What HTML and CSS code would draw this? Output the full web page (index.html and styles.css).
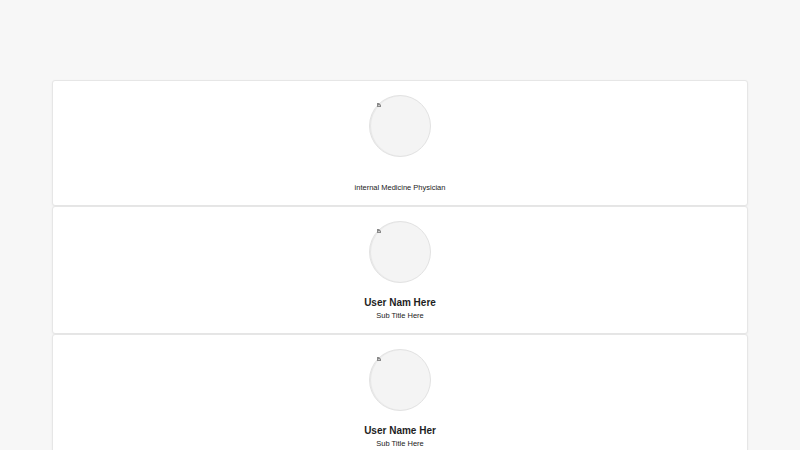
FILE: index.html
```html
<!DOCTYPE html>
<html lang="en">
<head>
<meta charset="utf-8">
<title>Users</title>
<link rel="stylesheet" href="styles.css">
</head>
<body>
<div class="list">
  <div class="card">
    <div class="avatar"><svg class="broken" width="4" height="4" viewBox="0 0 4 4"><path d="M0 0h2l2 2v2H0z" fill="#8a8a8a"/><path d="M1 2h2v1H1z" fill="#c8c8c8"/></svg></div>
    <div class="name empty"></div>
    <div class="sub">internal Medicine Physician</div>
  </div>
  <div class="card">
    <div class="avatar"><svg class="broken" width="4" height="4" viewBox="0 0 4 4"><path d="M0 0h2l2 2v2H0z" fill="#8a8a8a"/><path d="M1 2h2v1H1z" fill="#c8c8c8"/></svg></div>
    <div class="name">User Nam Here</div>
    <div class="sub">Sub Title Here</div>
  </div>
  <div class="card">
    <div class="avatar"><svg class="broken" width="4" height="4" viewBox="0 0 4 4"><path d="M0 0h2l2 2v2H0z" fill="#8a8a8a"/><path d="M1 2h2v1H1z" fill="#c8c8c8"/></svg></div>
    <div class="name">User Name Her</div>
    <div class="sub">Sub Title Here</div>
  </div>
</div>
</body>
</html>
```
FILE: styles.css
```css
html, body {
  margin: 0;
  padding: 0;
  background: #f7f7f7;
  font-family: "Liberation Sans", Arial, sans-serif;
  color: #222;
}
.list {
  width: 696px;
  margin: 80px auto 0;
  display: flex;
  flex-direction: column;
}
.card {
  background: #fff;
  border: 1px solid #e6e6e6;
  border-radius: 3px;
  box-shadow: 0 1px 3px rgba(0,0,0,0.05);
  padding: 14px 0 12px;
  display: flex;
  flex-direction: column;
  align-items: center;
}
.avatar {
  width: 60px;
  height: 60px;
  border-radius: 50%;
  background: #f4f4f4;
  border: 1px solid #e2e2e2;
  box-shadow: inset 1px 0 1px rgba(0,0,0,0.06);
  position: relative;
}
.broken {
  position: absolute;
  left: 7px;
  top: 7px;
}
.name {
  margin-top: 14px;
  font-size: 10px;
  line-height: 12px;
  font-weight: bold;
  color: #1e1e1e;
}
.name.empty {
  height: 10px;
}
.sub {
  margin-top: 2px;
  font-size: 7.5px;
  line-height: 10px;
  color: #222;
}
```
